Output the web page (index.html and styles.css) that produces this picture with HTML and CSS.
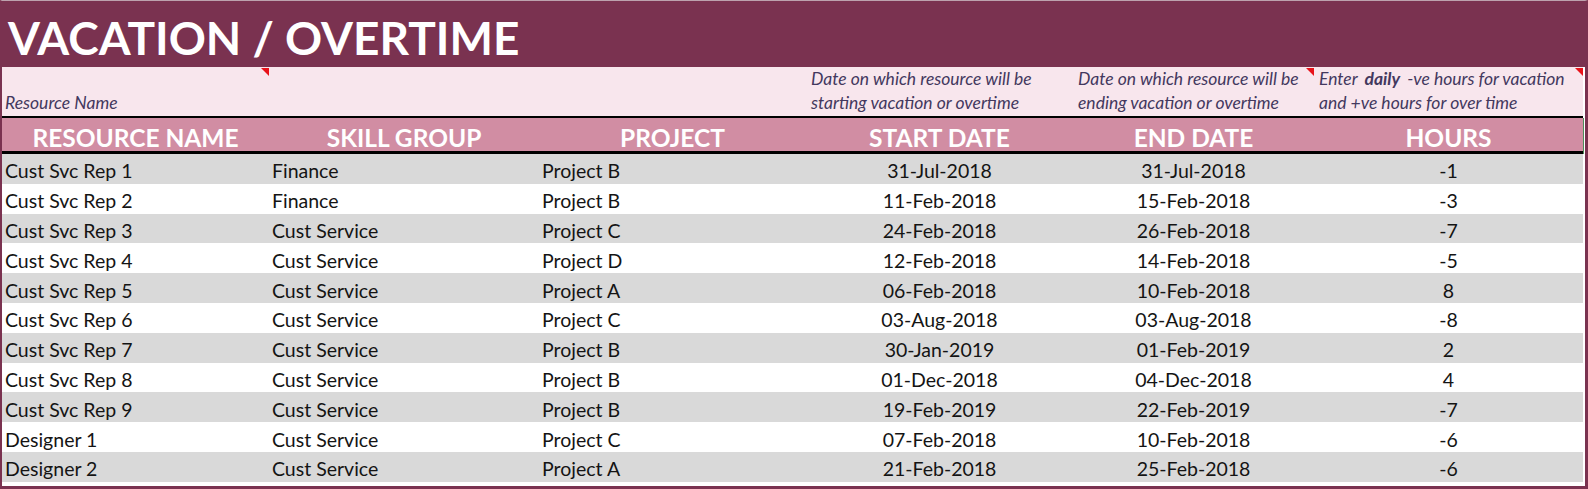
FILE: index.html
```html
<!DOCTYPE html>
<html>
<head>
<meta charset="utf-8">
<title>Vacation / Overtime</title>
<link rel="stylesheet" href="styles.css">
</head>
<body>
<div class="sheet">
  <div class="title">VACATION / OVERTIME</div>
  <div class="table">
    <div class="row notes">
      <div class="note first flag"><div class="nt">Resource Name</div></div>
      <div class="note"></div>
      <div class="note"></div>
      <div class="note"><div class="nt">Date on which resource will be<br>starting vacation or overtime</div></div>
      <div class="note flag"><div class="nt">Date on which resource will be<br>ending vacation or overtime</div></div>
      <div class="note flag"><div class="nt">Enter <b>daily</b> -ve hours for vacation<br>and +ve hours for over time</div></div>
    </div>
    <div class="row head">
      <div class="hc">RESOURCE NAME</div>
      <div class="hc">SKILL GROUP</div>
      <div class="hc">PROJECT</div>
      <div class="hc">START DATE</div>
      <div class="hc">END DATE</div>
      <div class="hc">HOURS</div>
    </div>
    <div class="row data"><div class="c first">Cust Svc Rep 1</div><div class="c">Finance</div><div class="c">Project B</div><div class="c ctr dt">31-Jul-2018</div><div class="c ctr dt">31-Jul-2018</div><div class="c ctr">-1</div></div>
    <div class="row data"><div class="c first">Cust Svc Rep 2</div><div class="c">Finance</div><div class="c">Project B</div><div class="c ctr dt">11-Feb-2018</div><div class="c ctr dt">15-Feb-2018</div><div class="c ctr">-3</div></div>
    <div class="row data"><div class="c first">Cust Svc Rep 3</div><div class="c">Cust Service</div><div class="c">Project C</div><div class="c ctr dt">24-Feb-2018</div><div class="c ctr dt">26-Feb-2018</div><div class="c ctr">-7</div></div>
    <div class="row data"><div class="c first">Cust Svc Rep 4</div><div class="c">Cust Service</div><div class="c">Project D</div><div class="c ctr dt">12-Feb-2018</div><div class="c ctr dt">14-Feb-2018</div><div class="c ctr">-5</div></div>
    <div class="row data"><div class="c first">Cust Svc Rep 5</div><div class="c">Cust Service</div><div class="c">Project A</div><div class="c ctr dt">06-Feb-2018</div><div class="c ctr dt">10-Feb-2018</div><div class="c ctr">8</div></div>
    <div class="row data"><div class="c first">Cust Svc Rep 6</div><div class="c">Cust Service</div><div class="c">Project C</div><div class="c ctr dt">03-Aug-2018</div><div class="c ctr dt">03-Aug-2018</div><div class="c ctr">-8</div></div>
    <div class="row data"><div class="c first">Cust Svc Rep 7</div><div class="c">Cust Service</div><div class="c">Project B</div><div class="c ctr dt">30-Jan-2019</div><div class="c ctr dt">01-Feb-2019</div><div class="c ctr">2</div></div>
    <div class="row data"><div class="c first">Cust Svc Rep 8</div><div class="c">Cust Service</div><div class="c">Project B</div><div class="c ctr dt">01-Dec-2018</div><div class="c ctr dt">04-Dec-2018</div><div class="c ctr">4</div></div>
    <div class="row data"><div class="c first">Cust Svc Rep 9</div><div class="c">Cust Service</div><div class="c">Project B</div><div class="c ctr dt">19-Feb-2019</div><div class="c ctr dt">22-Feb-2019</div><div class="c ctr">-7</div></div>
    <div class="row data"><div class="c first">Designer 1</div><div class="c">Cust Service</div><div class="c">Project C</div><div class="c ctr dt">07-Feb-2018</div><div class="c ctr dt">10-Feb-2018</div><div class="c ctr">-6</div></div>
    <div class="row data"><div class="c first">Designer 2</div><div class="c">Cust Service</div><div class="c">Project A</div><div class="c ctr dt">21-Feb-2018</div><div class="c ctr dt">25-Feb-2018</div><div class="c ctr">-6</div></div>
  </div>
</div>
</body>
</html>
```

FILE: styles.css
```css
* {
  box-sizing: border-box;
}

body {
  margin: 0;
  background: #ffffff;
}

.sheet {
  width: 1588px;
  height: 489px;
  border-top: 1px solid #bda2ae;
  border-left: 2px solid #7a3250;
  border-right: 3px solid #7a3250;
  border-bottom: 3px solid #7a3250;
  background: #ffffff;
  font-family: Lato, "Noto Sans", sans-serif;
  overflow: hidden;
  display: flex;
  flex-direction: column;
}

.title {
  height: 66px;
  flex: none;
  background: #7a3250;
  color: #ffffff;
  font-weight: 700;
  font-size: 46px;
  line-height: 1;
  padding: 8px 0 0 6px;
  display: flex;
  align-items: center;
}

.table {
  margin-right: 2px;
}

.row {
  display: grid;
  grid-template-columns: 267px 270px 267px 267px 241px 269px;
}

.notes {
  height: 51px;
  background: #f8e6ed;
  border-bottom: 2px solid #000000;
}

.note {
  position: relative;
  display: flex;
  align-items: flex-end;
  padding: 0 0 3px 5px;
  font-style: italic;
  font-size: 17.5px;
  line-height: 24px;
  color: #43385e;
  white-space: nowrap;
}

.note.first {
  padding-left: 3px;
}

.nt b {
  font-weight: 700;
  margin: 0 3px;
}

.flag::after {
  content: "";
  position: absolute;
  top: 1px;
  right: 0;
  width: 0;
  height: 0;
  border-style: solid;
  border-width: 0 8px 8px 0;
  border-color: transparent #e8121a transparent transparent;
}

.head {
  height: 36px;
  background: #d18da3;
  border-bottom: 3px solid #000000;
  box-shadow: 1px 0 0 #4d8d5a;
}

.hc {
  display: flex;
  align-items: center;
  justify-content: center;
  padding-top: 5px;
  color: #ffffff;
  font-weight: 700;
  font-size: 24.5px;
  white-space: nowrap;
}

.data {
  height: 29.8px;
  background: #ffffff;
}

.data:nth-of-type(odd) {
  background: #d9d9d9;
}

.c {
  display: flex;
  align-items: center;
  padding: 4px 0 0 3px;
  font-size: 19.5px;
  color: #141414;
  white-space: nowrap;
}

.c.first {
  padding-left: 3px;
}

.c.ctr {
  justify-content: center;
  padding-left: 0;
}
```
